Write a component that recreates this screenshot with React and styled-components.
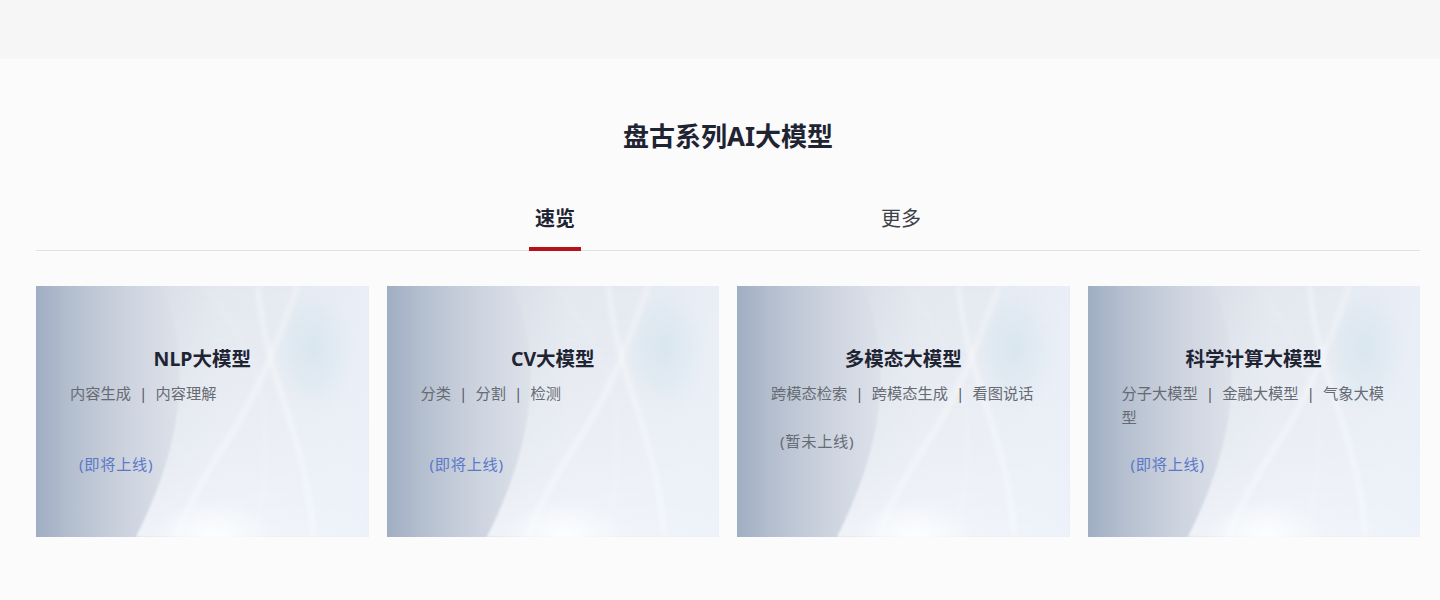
import React, { useId } from 'react';
import styled, { createGlobalStyle } from 'styled-components';

const GlobalStyle = createGlobalStyle`
  html, body {
    margin: 0;
    padding: 0;
    background: #fbfbfb;
    font-family: "Noto Sans", "Noto Sans CJK SC", sans-serif;
  }
`;

const TopBand = styled.div`
  height: 59px;
  background: #f6f6f6;
`;

const Section = styled.section`
  padding: 59px 20px 63px 36px;
`;

const Title = styled.h2`
  margin: 0;
  font-size: 26px;
  line-height: 36px;
  font-weight: 700;
  color: #1f2433;
  text-align: center;
`;

const TabBar = styled.div`
  display: flex;
  justify-content: center;
  margin-top: 34px;
  border-bottom: 1px solid #e2e2e2;
`;

const Tab = styled.div`
  position: relative;
  width: 346px;
  height: 62px;
  padding-bottom: 4px;
  box-sizing: border-box;
  display: flex;
  justify-content: center;
  align-items: center;
  font-size: 20px;
  font-weight: ${(props) => (props.$active ? 700 : 400)};
  color: ${(props) => (props.$active ? '#1f2433' : '#3c4048')};
  &::after {
    content: '';
    display: ${(props) => (props.$active ? 'block' : 'none')};
    position: absolute;
    left: 147px;
    bottom: -1px;
    width: 52px;
    height: 4px;
    background: #b5121b;
  }
`;

const CardRow = styled.div`
  display: grid;
  grid-template-columns: repeat(4, 1fr);
  column-gap: 18px;
  margin-top: 35px;
`;

const Card = styled.div`
  position: relative;
  height: 251px;
  box-sizing: border-box;
  padding: 58px 34px 0;
  overflow: hidden;
  background: linear-gradient(
    90deg,
    #a0aec3 0%,
    #b3bece 10%,
    #c3cbd8 20%,
    #d0d6e1 30%,
    #dbe0e9 42%,
    #e3e7ee 55%,
    #e7ebf2 100%
  );
`;

const Art = styled.svg`
  position: absolute;
  inset: 0;
  width: 100%;
  height: 100%;
`;

const CardBody = styled.div`
  position: relative;
`;

const CardTitle = styled.h3`
  margin: 0;
  font-size: 19.5px;
  line-height: 30px;
  font-weight: 700;
  color: #1f2433;
  text-align: center;
`;

const Description = styled.div`
  margin-top: 8px;
  min-height: ${(props) => (props.$reserve ? '47px' : '0')};
  font-size: 15.25px;
  line-height: 23.5px;
  color: #666b73;
`;

const Separator = styled.span`
  display: inline-block;
  width: 24.5px;
  text-align: center;
  color: #555a62;
`;

const Status = styled.div`
  margin: 23px 0 0 9px;
  font-size: 15.25px;
  line-height: 24px;
  letter-spacing: 0.7px;
  color: ${(props) => (props.$upcoming ? '#5a78c8' : '#666b73')};
`;

function CardArt() {
  const id = useId();
  return (
    <Art viewBox="0 0 333 251" preserveAspectRatio="none" aria-hidden="true">
      <defs>
        <radialGradient id={`${id}spot`}>
          <stop offset="0%" stopColor="#d2e3ec" stopOpacity="0.9" />
          <stop offset="55%" stopColor="#d8e6ee" stopOpacity="0.6" />
          <stop offset="100%" stopColor="#e4edf4" stopOpacity="0" />
        </radialGradient>
        <radialGradient id={`${id}glow`}>
          <stop offset="0%" stopColor="#ffffff" stopOpacity="0.85" />
          <stop offset="100%" stopColor="#ffffff" stopOpacity="0" />
        </radialGradient>
        <linearGradient id={`${id}edge`} x1="0" x2="1" y1="0" y2="0">
          <stop offset="0%" stopColor="#e9eef6" stopOpacity="0" />
          <stop offset="100%" stopColor="#eaf0fb" stopOpacity="1" />
        </linearGradient>
        <linearGradient id={`${id}arc`} x1="0" x2="0" y1="0" y2="1">
          <stop offset="0%" stopColor="#eef2f7" stopOpacity="0.05" />
          <stop offset="40%" stopColor="#f0f3f8" stopOpacity="0.4" />
          <stop offset="100%" stopColor="#f2f6fb" stopOpacity="0.92" />
        </linearGradient>
        <filter id={`${id}soft`}>
          <feGaussianBlur stdDeviation="2.5" />
        </filter>
        <filter id={`${id}edgeBlur`}>
          <feGaussianBlur stdDeviation="1" />
        </filter>
      </defs>
      <path
        d="M100 251C128 196 150 130 142 60C140 38 134 18 124 0H333V251Z"
        fill={`url(#${id}arc)`}
        filter={`url(#${id}edgeBlur)`}
      />
      <ellipse cx="280" cy="62" rx="44" ry="70" fill={`url(#${id}spot)`} />
      <rect x="230" y="0" width="103" height="251" fill={`url(#${id}edge)`} opacity="0.5" />
      <ellipse cx="178" cy="250" rx="60" ry="36" fill={`url(#${id}glow)`} />
      <g fill="none" stroke="#ffffff" filter={`url(#${id}soft)`}>
        <path d="M222 0C226 50 240 90 256 140C270 185 276 220 278 251" strokeWidth="4" strokeOpacity="0.45" />
        <path d="M262 0C240 60 222 110 188 160C166 195 150 225 140 251" strokeWidth="4" strokeOpacity="0.45" />
        <path d="M170 0C200 40 222 80 228 120C234 165 228 215 218 251" strokeWidth="2" strokeOpacity="0.2" />
      </g>
    </Art>
  );
}

const cards = [
  {
    title: 'NLP大模型',
    items: ['内容生成', '内容理解'],
    status: '(即将上线)',
    upcoming: true,
    reserve: true,
  },
  {
    title: 'CV大模型',
    items: ['分类', '分割', '检测'],
    status: '(即将上线)',
    upcoming: true,
    reserve: true,
  },
  {
    title: '多模态大模型',
    items: ['跨模态检索', '跨模态生成', '看图说话'],
    status: '(暂未上线)',
    upcoming: false,
    reserve: false,
  },
  {
    title: '科学计算大模型',
    items: ['分子大模型', '金融大模型', '气象大模型'],
    status: '(即将上线)',
    upcoming: true,
    reserve: true,
  },
];

export default function App() {
  return (
    <>
      <GlobalStyle />
      <TopBand />
      <Section>
        <Title>盘古系列AI大模型</Title>
        <TabBar>
          <Tab $active>速览</Tab>
          <Tab>更多</Tab>
        </TabBar>
        <CardRow>
          {cards.map((card) => (
            <Card key={card.title}>
              <CardArt />
              <CardBody>
                <CardTitle>{card.title}</CardTitle>
                <Description $reserve={card.reserve}>
                  {card.items.map((item, index) => (
                    <React.Fragment key={item}>
                      {index > 0 && <Separator>|</Separator>}
                      {item}
                    </React.Fragment>
                  ))}
                </Description>
                <Status $upcoming={card.upcoming}>{card.status}</Status>
              </CardBody>
            </Card>
          ))}
        </CardRow>
      </Section>
    </>
  );
}
